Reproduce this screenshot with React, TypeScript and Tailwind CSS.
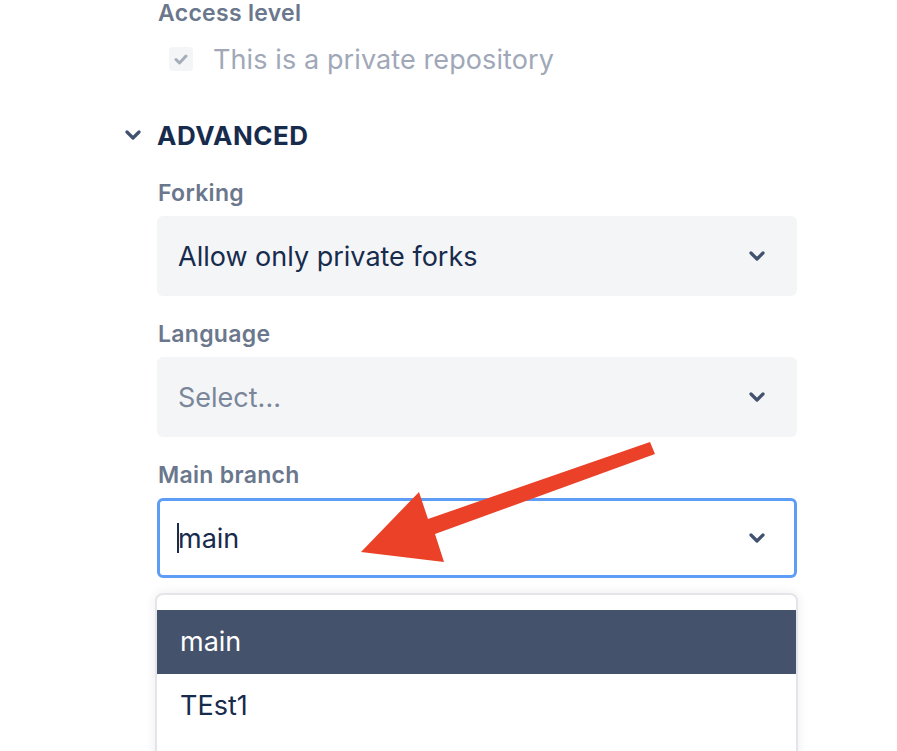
import React from "react";

function Chevron({ className = "" }: { className?: string }) {
  return (
    <svg width="16" height="10" viewBox="0 0 16 10" className={className} fill="none">
      <path d="M2 2L8 8L14 2" stroke="#42526e" strokeWidth="3.2" strokeLinecap="round" strokeLinejoin="round" />
    </svg>
  );
}

function Label({ children, className = "" }: { children: React.ReactNode; className?: string }) {
  return (
    <div className={"h-[24px] leading-[26px] text-[23px] font-semibold tracking-[0.3px] text-[#6b778c] " + className}>{children}</div>
  );
}

export default function App() {
  return (
    <div
      className="relative w-[897px] h-[751px] overflow-hidden bg-white"
      style={{ fontFamily: "Inter, 'Noto Sans', sans-serif" }}
    >
      <div className="ml-[157px] w-[640px] flex flex-col">
        <div className="h-[26px] leading-[26px] text-[23px] font-semibold tracking-[0.3px] text-[#6b778c] ml-[1px]">Access level</div>
        <div className="mt-[21px] h-[24px] flex items-center ml-[12px]">
          <div className="w-[24px] h-[24px] rounded-[4px] bg-[#f4f5f7] flex items-center justify-center">
            <svg width="14" height="11" viewBox="0 0 14 11" fill="none">
              <path d="M2 5.5L5.5 9L12 2" stroke="#a5adba" strokeWidth="3" strokeLinecap="round" strokeLinejoin="round" />
            </svg>
          </div>
          <span className="ml-[20px] text-[27px] text-[#a0a8b8] leading-[26px] pt-[2px] tracking-[0.1px]">This is a private repository</span>
        </div>
        <div className="mt-[48px] h-[32px] flex items-center -ml-[32px]">
          <Chevron className="mr-[16px]" />
          <span className="text-[26px] font-bold text-[#172b4d] tracking-[0.5px]">ADVANCED</span>
        </div>

        <Label className="mt-[29px] ml-[1px]">Forking</Label>
        <div className="mt-[12px] h-[80px] rounded-[6px] bg-[#f4f5f7] flex items-center pl-[21px] pr-[32px]">
          <span className="flex-1 text-[27px] text-[#172b4d] leading-[32px] pt-[2px]">Allow only private forks</span>
          <Chevron />
        </div>

        <Label className="mt-[25px] ml-[1px]">Language</Label>
        <div className="mt-[12px] h-[80px] rounded-[6px] bg-[#f4f5f7] flex items-center pl-[21px] pr-[32px]">
          <span className="flex-1 text-[27px] text-[#7a869a] leading-[32px] pt-[2px]">Select...</span>
          <Chevron />
        </div>

        <Label className="mt-[25px] ml-[1px]">Main branch</Label>
        <div className="mt-[12px] h-[80px] rounded-[6px] bg-white border-[3px] border-[#5e9df6] flex items-center pl-[17px] pr-[29px]">
          <span className="w-[2px] h-[30px] bg-[#172b4d]" />
          <span className="flex-1 text-[27px] text-[#172b4d] -ml-[1px] leading-[32px] pt-[2px]">main</span>
          <Chevron />
        </div>

        <div className="mt-[15px] -ml-[2px] w-[643px] rounded-t-[8px] border-2 border-b-0 border-[#e4e5e8] bg-white pt-[15px] shadow-[0_0_12px_rgba(9,30,66,0.08)]">
          <div className="h-[64px] bg-[#44526c] flex items-center pl-[23px] text-[27px] text-white">main</div>
          <div className="h-[64px] flex items-center pl-[23px] text-[27px] text-[#172b4d]">TEst1</div>
          <div className="h-[40px]" />
        </div>
      </div>

      <svg className="absolute left-0 top-0 pointer-events-none" width="897" height="751" viewBox="0 0 897 751">
        <polygon
          points="650,442 428,519 419,492 361,552 444,562 435,534 655,454"
          fill="#ea4128"
        />
      </svg>
    </div>
  );
}
